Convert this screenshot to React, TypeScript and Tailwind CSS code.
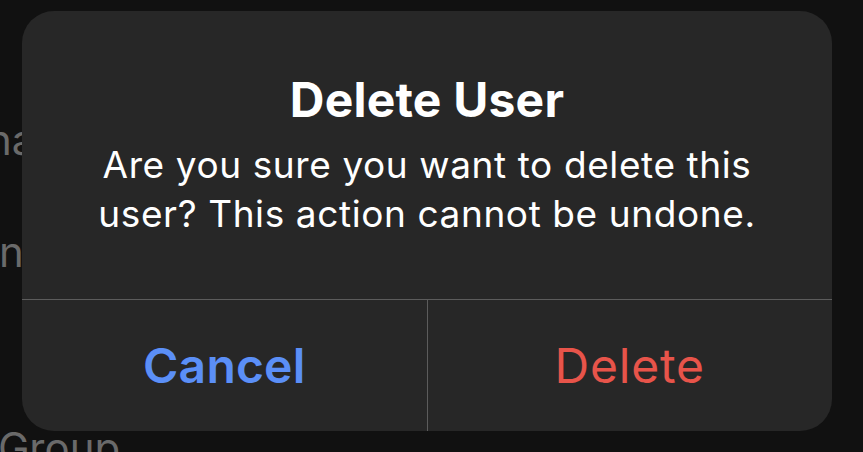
import React from "react";

export default function App() {
  return (
    <div
      className="relative w-[863px] h-[452px] overflow-hidden bg-[#111111]"
      style={{ fontFamily: "Inter, 'Noto Sans', sans-serif" }}
    >
      <div className="flex flex-col text-[42px] leading-none text-[#6a6a6a]">
        <div className="mt-[119px] -ml-[13px]">na</div>
        <div className="mt-[70px] -ml-[1px]">n</div>
        <div className="mt-[154px] -ml-[2px]">Group</div>
      </div>

      <div className="absolute left-[22px] top-[11px] w-[810px] h-[420px] rounded-[32px] bg-[#272727] flex flex-col overflow-hidden">
        <div className="h-[288px] flex flex-col items-center pt-[61px]">
          <div className="text-[48px] leading-[56px] font-bold text-white tracking-[0.2px]">
            Delete User
          </div>
          <div className="mt-[12px] text-[37px] leading-[49px] text-white text-center tracking-[0.6px]">
            Are you sure you want to delete this
            <br />
            user? This action cannot be undone.
          </div>
        </div>
        <div className="h-px bg-[#5c5c5c]" />
        <div className="flex flex-1">
          <button className="flex-1 flex items-center justify-center text-[48px] font-semibold text-[#5b8ff7] tracking-[0.2px]">
            Cancel
          </button>
          <div className="w-px bg-[#5c5c5c]" />
          <button className="flex-1 flex items-center justify-center text-[48px] text-[#e8544a] tracking-[0.8px]">
            Delete
          </button>
        </div>
      </div>
    </div>
  );
}
